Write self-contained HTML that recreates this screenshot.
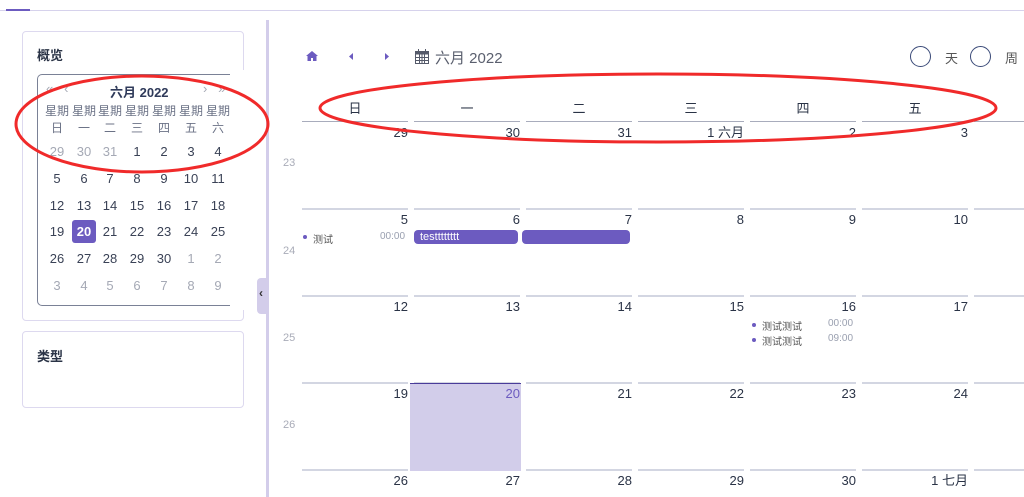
<!DOCTYPE html><html><head><meta charset="utf-8"><style>
body{margin:0;width:1024px;height:497px;overflow:hidden;background:#fff;font-family:"Liberation Sans","Noto Sans CJK SC",sans-serif;color:#2a3346;position:relative}
.a{position:absolute}
.ln{position:absolute;height:2px;background:#d3d6e2;width:106px}
.hl{position:absolute;height:1px;background:#a8acbc;width:106px;top:121px}
.dn{position:absolute;width:106px;text-align:right;font-size:13px;line-height:16px}
.wk{position:absolute;left:283px;font-size:11px;color:#a9acb8}
.mc{position:absolute;width:26px;text-align:center;font-size:13px;line-height:16px;color:#3a4256}
.mh{position:absolute;width:26px;text-align:center;font-size:12px;line-height:17px;color:#6b7286;top:103px}
.g{color:#a5a9b5}
.hd{position:absolute;width:106px;text-align:center;font-size:13px;top:98px}
.ev{position:absolute;font-size:10px;color:#555}
</style></head><body>
<div class="a" style="left:0;top:10px;width:1024px;height:1px;background:#d6d2ec"></div>
<div class="a" style="left:6px;top:9px;width:24px;height:2px;background:#6c5bc0"></div>
<div class="a" style="left:22px;top:31px;width:220px;height:288px;border:1px solid #ddd9ef;border-radius:4px"></div>
<div class="a" style="left:37px;top:45px;font-size:13px;font-weight:bold">概览</div>
<div class="a" style="left:37px;top:74px;width:200px;height:230px;border:1px solid #7a8196;border-right:none;border-radius:5px 0 0 5px"></div>
<div class="a" style="left:230px;top:70px;width:20px;height:240px;background:#fff"></div>
<div class="a g" style="left:46px;top:81px;font-size:13px">«&nbsp;&nbsp;&nbsp;‹</div>
<div class="a" style="left:110px;top:82px;font-size:13px;font-weight:bold;color:#2f3a5a">六月 2022</div>
<div class="a g" style="left:203px;top:81px;font-size:13px">›&nbsp;&nbsp;&nbsp;»</div>
<div class="a" style="left:22px;top:331px;width:220px;height:75px;border:1px solid #ddd9ef;border-radius:4px"></div>
<div class="a" style="left:37px;top:346px;font-size:13px;font-weight:bold">类型</div>
<div class="mh" style="left:44px">星期<br>日</div><div class="mh" style="left:71px">星期<br>一</div><div class="mh" style="left:97px">星期<br>二</div><div class="mh" style="left:124px">星期<br>三</div><div class="mh" style="left:151px">星期<br>四</div><div class="mh" style="left:178px">星期<br>五</div><div class="mh" style="left:205px">星期<br>六</div>
<div class="mc g" style="left:44px;top:144px">29</div><div class="mc g" style="left:71px;top:144px">30</div><div class="mc g" style="left:97px;top:144px">31</div><div class="mc" style="left:124px;top:144px">1</div><div class="mc" style="left:151px;top:144px">2</div><div class="mc" style="left:178px;top:144px">3</div><div class="mc" style="left:205px;top:144px">4</div>
<div class="mc" style="left:44px;top:171px">5</div><div class="mc" style="left:71px;top:171px">6</div><div class="mc" style="left:97px;top:171px">7</div><div class="mc" style="left:124px;top:171px">8</div><div class="mc" style="left:151px;top:171px">9</div><div class="mc" style="left:178px;top:171px">10</div><div class="mc" style="left:205px;top:171px">11</div>
<div class="mc" style="left:44px;top:198px">12</div><div class="mc" style="left:71px;top:198px">13</div><div class="mc" style="left:97px;top:198px">14</div><div class="mc" style="left:124px;top:198px">15</div><div class="mc" style="left:151px;top:198px">16</div><div class="mc" style="left:178px;top:198px">17</div><div class="mc" style="left:205px;top:198px">18</div>
<div class="a" style="left:72px;top:220px;width:24px;height:23px;background:#6c5bc0;border-radius:3px"></div>
<div class="mc" style="left:44px;top:224px">19</div><div class="mc" style="left:71px;top:224px;color:#fff;font-weight:bold">20</div><div class="mc" style="left:97px;top:224px">21</div><div class="mc" style="left:124px;top:224px">22</div><div class="mc" style="left:151px;top:224px">23</div><div class="mc" style="left:178px;top:224px">24</div><div class="mc" style="left:205px;top:224px">25</div>
<div class="mc" style="left:44px;top:251px">26</div><div class="mc" style="left:71px;top:251px">27</div><div class="mc" style="left:97px;top:251px">28</div><div class="mc" style="left:124px;top:251px">29</div><div class="mc" style="left:151px;top:251px">30</div><div class="mc g" style="left:178px;top:251px">1</div><div class="mc g" style="left:205px;top:251px">2</div>
<div class="mc g" style="left:44px;top:278px">3</div><div class="mc g" style="left:71px;top:278px">4</div><div class="mc g" style="left:97px;top:278px">5</div><div class="mc g" style="left:124px;top:278px">6</div><div class="mc g" style="left:151px;top:278px">7</div><div class="mc g" style="left:178px;top:278px">8</div><div class="mc g" style="left:205px;top:278px">9</div>
<div class="a" style="left:266px;top:20px;width:3px;height:477px;background:#d3cdea"></div>
<div class="a" style="left:257px;top:278px;width:11px;height:36px;background:#d3cdea;border-radius:4px 0 0 4px"></div>
<div class="a" style="left:259px;top:286px;font-size:12px;font-weight:bold;color:#333">‹</div>
<svg class="a" style="left:306px;top:51px" width="12" height="10" viewBox="0 0 12 10"><path d="M6 0L0 5h1.5v5h3.5V7h2v3h3.5V5H12z" fill="#6c5bc0"/></svg>
<svg class="a" style="left:349px;top:53px" width="5" height="7"><path d="M4 0L0 3.5 4 7z" fill="#6c5bc0"/></svg>
<svg class="a" style="left:385px;top:53px" width="5" height="7"><path d="M0 0L4 3.5 0 7z" fill="#6c5bc0"/></svg>
<svg class="a" style="left:415px;top:49px" width="14" height="15" viewBox="0 0 14 15"><rect x="0.5" y="2.5" width="13" height="12" fill="none" stroke="#555a6a"/><rect x="0.5" y="2.5" width="13" height="3" fill="#555a6a"/><path d="M3.5 0v4M10.5 0v4M0 8.5h14M0 11.5h14M4.5 5v10M7 5v10M9.5 5v10" stroke="#555a6a"/></svg>
<div class="a" style="left:435px;top:47px;font-size:15px;color:#5a5f6e">六月 2022</div>
<div class="a" style="left:910px;top:46px;width:19px;height:19px;border:1.5px solid #3a4a78;border-radius:50%"></div>
<div class="a" style="left:945px;top:48px;font-size:13px;color:#555">天</div>
<div class="a" style="left:970px;top:46px;width:19px;height:19px;border:1.5px solid #3a4a78;border-radius:50%"></div>
<div class="a" style="left:1005px;top:48px;font-size:13px;color:#555">周</div>
<div class="hd" style="left:302px">日</div><div class="hd" style="left:414px">一</div><div class="hd" style="left:526px">二</div><div class="hd" style="left:638px">三</div><div class="hd" style="left:750px">四</div><div class="hd" style="left:862px">五</div>
<div class="hl" style="left:302px"></div><div class="hl" style="left:414px"></div><div class="hl" style="left:526px"></div><div class="hl" style="left:638px"></div><div class="hl" style="left:750px"></div><div class="hl" style="left:862px"></div><div class="hl" style="left:974px"></div>
<div class="ln" style="left:302px;top:208px"></div><div class="ln" style="left:414px;top:208px"></div><div class="ln" style="left:526px;top:208px"></div><div class="ln" style="left:638px;top:208px"></div><div class="ln" style="left:750px;top:208px"></div><div class="ln" style="left:862px;top:208px"></div><div class="ln" style="left:974px;top:208px"></div>
<div class="ln" style="left:302px;top:295px"></div><div class="ln" style="left:414px;top:295px"></div><div class="ln" style="left:526px;top:295px"></div><div class="ln" style="left:638px;top:295px"></div><div class="ln" style="left:750px;top:295px"></div><div class="ln" style="left:862px;top:295px"></div><div class="ln" style="left:974px;top:295px"></div>
<div class="ln" style="left:302px;top:382px"></div><div class="ln" style="left:414px;top:382px"></div><div class="ln" style="left:526px;top:382px"></div><div class="ln" style="left:638px;top:382px"></div><div class="ln" style="left:750px;top:382px"></div><div class="ln" style="left:862px;top:382px"></div><div class="ln" style="left:974px;top:382px"></div>
<div class="ln" style="left:302px;top:469px"></div><div class="ln" style="left:414px;top:469px"></div><div class="ln" style="left:526px;top:469px"></div><div class="ln" style="left:638px;top:469px"></div><div class="ln" style="left:750px;top:469px"></div><div class="ln" style="left:862px;top:469px"></div><div class="ln" style="left:974px;top:469px"></div>
<div class="a" style="left:410px;top:383px;width:111px;height:87px;background:#d2cdea;border-top:1px solid #4a3c9a"></div>
<div class="wk" style="top:157px">23</div><div class="wk" style="top:245px">24</div><div class="wk" style="top:332px">25</div><div class="wk" style="top:419px">26</div>
<div class="dn" style="left:302px;top:125px">29</div><div class="dn" style="left:414px;top:125px">30</div><div class="dn" style="left:526px;top:125px">31</div><div class="dn" style="left:638px;top:125px">1 六月</div><div class="dn" style="left:750px;top:125px">2</div><div class="dn" style="left:862px;top:125px">3</div>
<div class="dn" style="left:302px;top:212px">5</div><div class="dn" style="left:414px;top:212px">6</div><div class="dn" style="left:526px;top:212px">7</div><div class="dn" style="left:638px;top:212px">8</div><div class="dn" style="left:750px;top:212px">9</div><div class="dn" style="left:862px;top:212px">10</div>
<div class="dn" style="left:302px;top:299px">12</div><div class="dn" style="left:414px;top:299px">13</div><div class="dn" style="left:526px;top:299px">14</div><div class="dn" style="left:638px;top:299px">15</div><div class="dn" style="left:750px;top:299px">16</div><div class="dn" style="left:862px;top:299px">17</div>
<div class="dn" style="left:302px;top:386px">19</div><div class="dn" style="left:414px;top:386px;color:#6c5bc0">20</div><div class="dn" style="left:526px;top:386px">21</div><div class="dn" style="left:638px;top:386px">22</div><div class="dn" style="left:750px;top:386px">23</div><div class="dn" style="left:862px;top:386px">24</div>
<div class="dn" style="left:302px;top:473px">26</div><div class="dn" style="left:414px;top:473px">27</div><div class="dn" style="left:526px;top:473px">28</div><div class="dn" style="left:638px;top:473px">29</div><div class="dn" style="left:750px;top:473px">30</div><div class="dn" style="left:862px;top:473px">1 七月</div>
<div class="a" style="left:303px;top:235px;width:4px;height:4px;border-radius:50%;background:#6c5bc0"></div>
<div class="ev" style="left:313px;top:231px">测试</div><div class="ev" style="left:380px;top:231px;color:#9aa0b0">00:00</div>
<div class="a" style="left:414px;top:230px;width:104px;height:14px;background:#6c5bc0;border-radius:4px;color:#fff;font-size:11px;line-height:14px;text-indent:6px">testttttttt</div>
<div class="a" style="left:522px;top:230px;width:108px;height:14px;background:#6c5bc0;border-radius:4px"></div>
<div class="a" style="left:752px;top:323px;width:4px;height:4px;border-radius:50%;background:#6c5bc0"></div>
<div class="ev" style="left:762px;top:318px">测试测试</div><div class="ev" style="left:828px;top:318px;color:#9aa0b0">00:00</div>
<div class="a" style="left:752px;top:338px;width:4px;height:4px;border-radius:50%;background:#6c5bc0"></div>
<div class="ev" style="left:762px;top:333px">测试测试</div><div class="ev" style="left:828px;top:333px;color:#9aa0b0">09:00</div>
<svg class="a" style="left:0;top:0" width="1024" height="497"><ellipse cx="142" cy="124" rx="126" ry="48" fill="none" stroke="#f02a2a" stroke-width="3"/><ellipse cx="658" cy="108" rx="338" ry="34" fill="none" stroke="#f02a2a" stroke-width="3"/></svg>
</body></html>
